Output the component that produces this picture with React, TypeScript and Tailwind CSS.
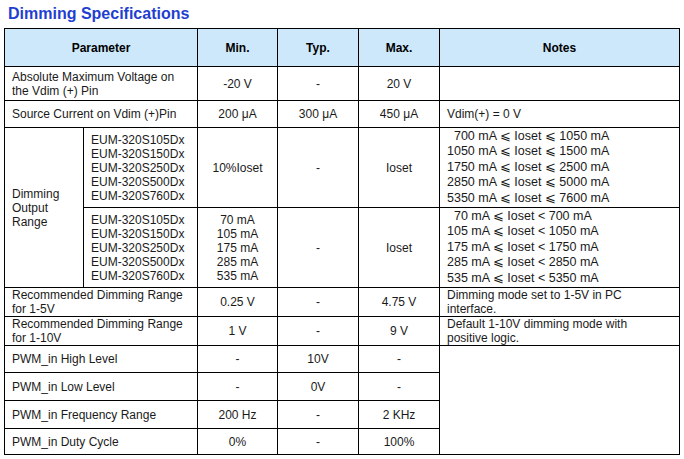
const td = "border border-black px-[7px] py-0 align-middle";
const tdn = "border border-black pl-[7px] pr-[24px] py-0 align-middle";
const tdc = "border border-black px-[4px] py-0 align-middle text-center";

const models = ["EUM-320S105Dx", "EUM-320S150Dx", "EUM-320S250Dx", "EUM-320S500Dx", "EUM-320S760Dx"];
const highRanges = [
  "\u00a0\u00a0700 mA \u2A7D Ioset \u2A7D 1050 mA",
  "1050 mA \u2A7D Ioset \u2A7D 1500 mA",
  "1750 mA \u2A7D Ioset \u2A7D 2500 mA",
  "2850 mA \u2A7D Ioset \u2A7D 5000 mA",
  "5350 mA \u2A7D Ioset \u2A7D 7600 mA",
];
const lowRanges = [
  "\u00a0\u00a070 mA \u2A7D Ioset < 700 mA",
  "105 mA \u2A7D Ioset < 1050 mA",
  "175 mA \u2A7D Ioset < 1750 mA",
  "285 mA \u2A7D Ioset < 2850 mA",
  "535 mA \u2A7D Ioset < 5350 mA",
];
const lowMin = ["70 mA", "105 mA", "175 mA", "285 mA", "535 mA"];

function Lines({ items, wide }: { items: string[]; wide?: boolean }) {
  return (
    <div className={wide ? "leading-[15.6px] text-[12.5px]" : "leading-[14px]"}>
      {items.map((t) => (
        <div key={t} className="whitespace-pre">{t}</div>
      ))}
    </div>
  );
}

export default function App() {
  return (
    <div className="w-[684px] h-[459px] bg-white text-[#1a1a1a] font-['Liberation_Sans',Arial,sans-serif] text-[12px]">
      <div className="pl-[8px] pt-[4px] h-[28px] text-[16px] font-bold leading-[20px] text-[#1f3fd0]">
        Dimming Specifications
      </div>
      <table className="ml-[4px] w-[675px] table-fixed border-collapse leading-[14px]">
        <colgroup>
          <col className="w-[79px]" />
          <col className="w-[114px]" />
          <col className="w-[80px]" />
          <col className="w-[81px]" />
          <col className="w-[81px]" />
          <col className="w-[240px]" />
        </colgroup>
        <thead>
          <tr className="h-[38px] bg-[#cde8fb] text-black font-bold">
            <th colSpan={2} className={tdc}>Parameter</th>
            <th className={tdc}>Min.</th>
            <th className={tdc}>Typ.</th>
            <th className={tdc}>Max.</th>
            <th className={tdc}>Notes</th>
          </tr>
        </thead>
        <tbody>
          <tr className="h-[34px]">
            <td colSpan={2} className={td}>Absolute Maximum Voltage on the Vdim (+) Pin</td>
            <td className={tdc}>-20 V</td>
            <td className={tdc}>-</td>
            <td className={tdc}>20 V</td>
            <td className={tdn}></td>
          </tr>
          <tr className="h-[27px]">
            <td colSpan={2} className={td}>Source Current on Vdim (+)Pin</td>
            <td className={tdc}>200 μA</td>
            <td className={tdc}>300 μA</td>
            <td className={tdc}>450 μA</td>
            <td className={tdn}>Vdim(+) = 0 V</td>
          </tr>
          <tr className="h-[80px]">
            <td rowSpan={2} className={td}>Dimming Output Range</td>
            <td className={td}><Lines items={models} /></td>
            <td className={tdc}>10%Ioset</td>
            <td className={tdc}>-</td>
            <td className={tdc}>Ioset</td>
            <td className={tdn}><Lines items={highRanges} wide /></td>
          </tr>
          <tr className="h-[80px]">
            <td className={td}><Lines items={models} /></td>
            <td className={tdc}><Lines items={lowMin} /></td>
            <td className={tdc}>-</td>
            <td className={tdc}>Ioset</td>
            <td className={tdn}><Lines items={lowRanges} wide /></td>
          </tr>
          <tr className="h-[29px]">
            <td colSpan={2} className={td}>Recommended Dimming Range for 1-5V</td>
            <td className={tdc}>0.25 V</td>
            <td className={tdc}>-</td>
            <td className={tdc}>4.75 V</td>
            <td className={tdn}>Dimming mode set to 1-5V in PC interface.</td>
          </tr>
          <tr className="h-[28px]">
            <td colSpan={2} className={td}>Recommended Dimming Range for 1-10V</td>
            <td className={tdc}>1 V</td>
            <td className={tdc}>-</td>
            <td className={tdc}>9 V</td>
            <td className={tdn}>Default 1-10V dimming mode with positive logic.</td>
          </tr>
          <tr className="h-[27px]">
            <td colSpan={2} className={td}>PWM_in High Level</td>
            <td className={tdc}>-</td>
            <td className={tdc}>10V</td>
            <td className={tdc}>-</td>
            <td rowSpan={4} className={tdn}></td>
          </tr>
          <tr className="h-[28px]">
            <td colSpan={2} className={td}>PWM_in Low Level</td>
            <td className={tdc}>-</td>
            <td className={tdc}>0V</td>
            <td className={tdc}>-</td>
          </tr>
          <tr className="h-[28px]">
            <td colSpan={2} className={td}>PWM_in Frequency Range</td>
            <td className={tdc}>200 Hz</td>
            <td className={tdc}>-</td>
            <td className={tdc}>2 KHz</td>
          </tr>
          <tr className="h-[26px]">
            <td colSpan={2} className={td}>PWM_in Duty Cycle</td>
            <td className={tdc}>0%</td>
            <td className={tdc}>-</td>
            <td className={tdc}>100%</td>
          </tr>
        </tbody>
      </table>
    </div>
  );
}
